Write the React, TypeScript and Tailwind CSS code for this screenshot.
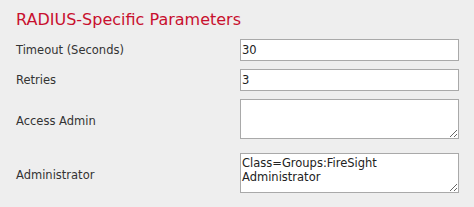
import React from 'react';

const rows = [
  { label: 'Timeout (Seconds)', kind: 'input', value: '30' },
  { label: 'Retries', kind: 'input', value: '3' },
  { label: 'Access Admin', kind: 'textarea', value: '' },
  { label: 'Administrator', kind: 'textarea', value: 'Class=Groups:FireSight\nAdministrator' },
];

const App: React.FC = () => {
  return (
    <div className="w-[474px] h-[207px] bg-[#eeeeee] overflow-hidden" style={{ fontFamily: '"DejaVu Sans", Verdana, sans-serif' }}>
      <div className="pl-[16px] pt-[7px]">
        <h2 className="text-[#c8102e] text-[16px] leading-[25px]">RADIUS-Specific Parameters</h2>
        <div className="mt-[7px] flex flex-col">
          {rows.map((row, i) => (
            <div
              key={row.label}
              className={`flex items-center ${i === 0 ? '' : i === 3 ? 'mt-[14px]' : 'mt-[8px]'}`}
            >
              <label className={`w-[224px] text-[11.5px] text-[#333333] ${i >= 2 ? 'pt-[6px]' : 'pt-[2px]'}`}>{row.label}</label>
              {row.kind === 'input' ? (
                <input
                  readOnly
                  value={row.value}
                  className="w-[219px] h-[22px] bg-white border border-[#a9a9a9] px-[1px] text-[11.5px] text-[#222222] outline-none"
                />
              ) : (
                <textarea
                  readOnly
                  value={row.value}
                  className="w-[219px] h-[40px] bg-white border border-[#a9a9a9] px-[1px] py-[2px] text-[11.5px] leading-[14px] text-[#222222] outline-none"
                />
              )}
            </div>
          ))}
        </div>
      </div>
    </div>
  );
};

export default App;
